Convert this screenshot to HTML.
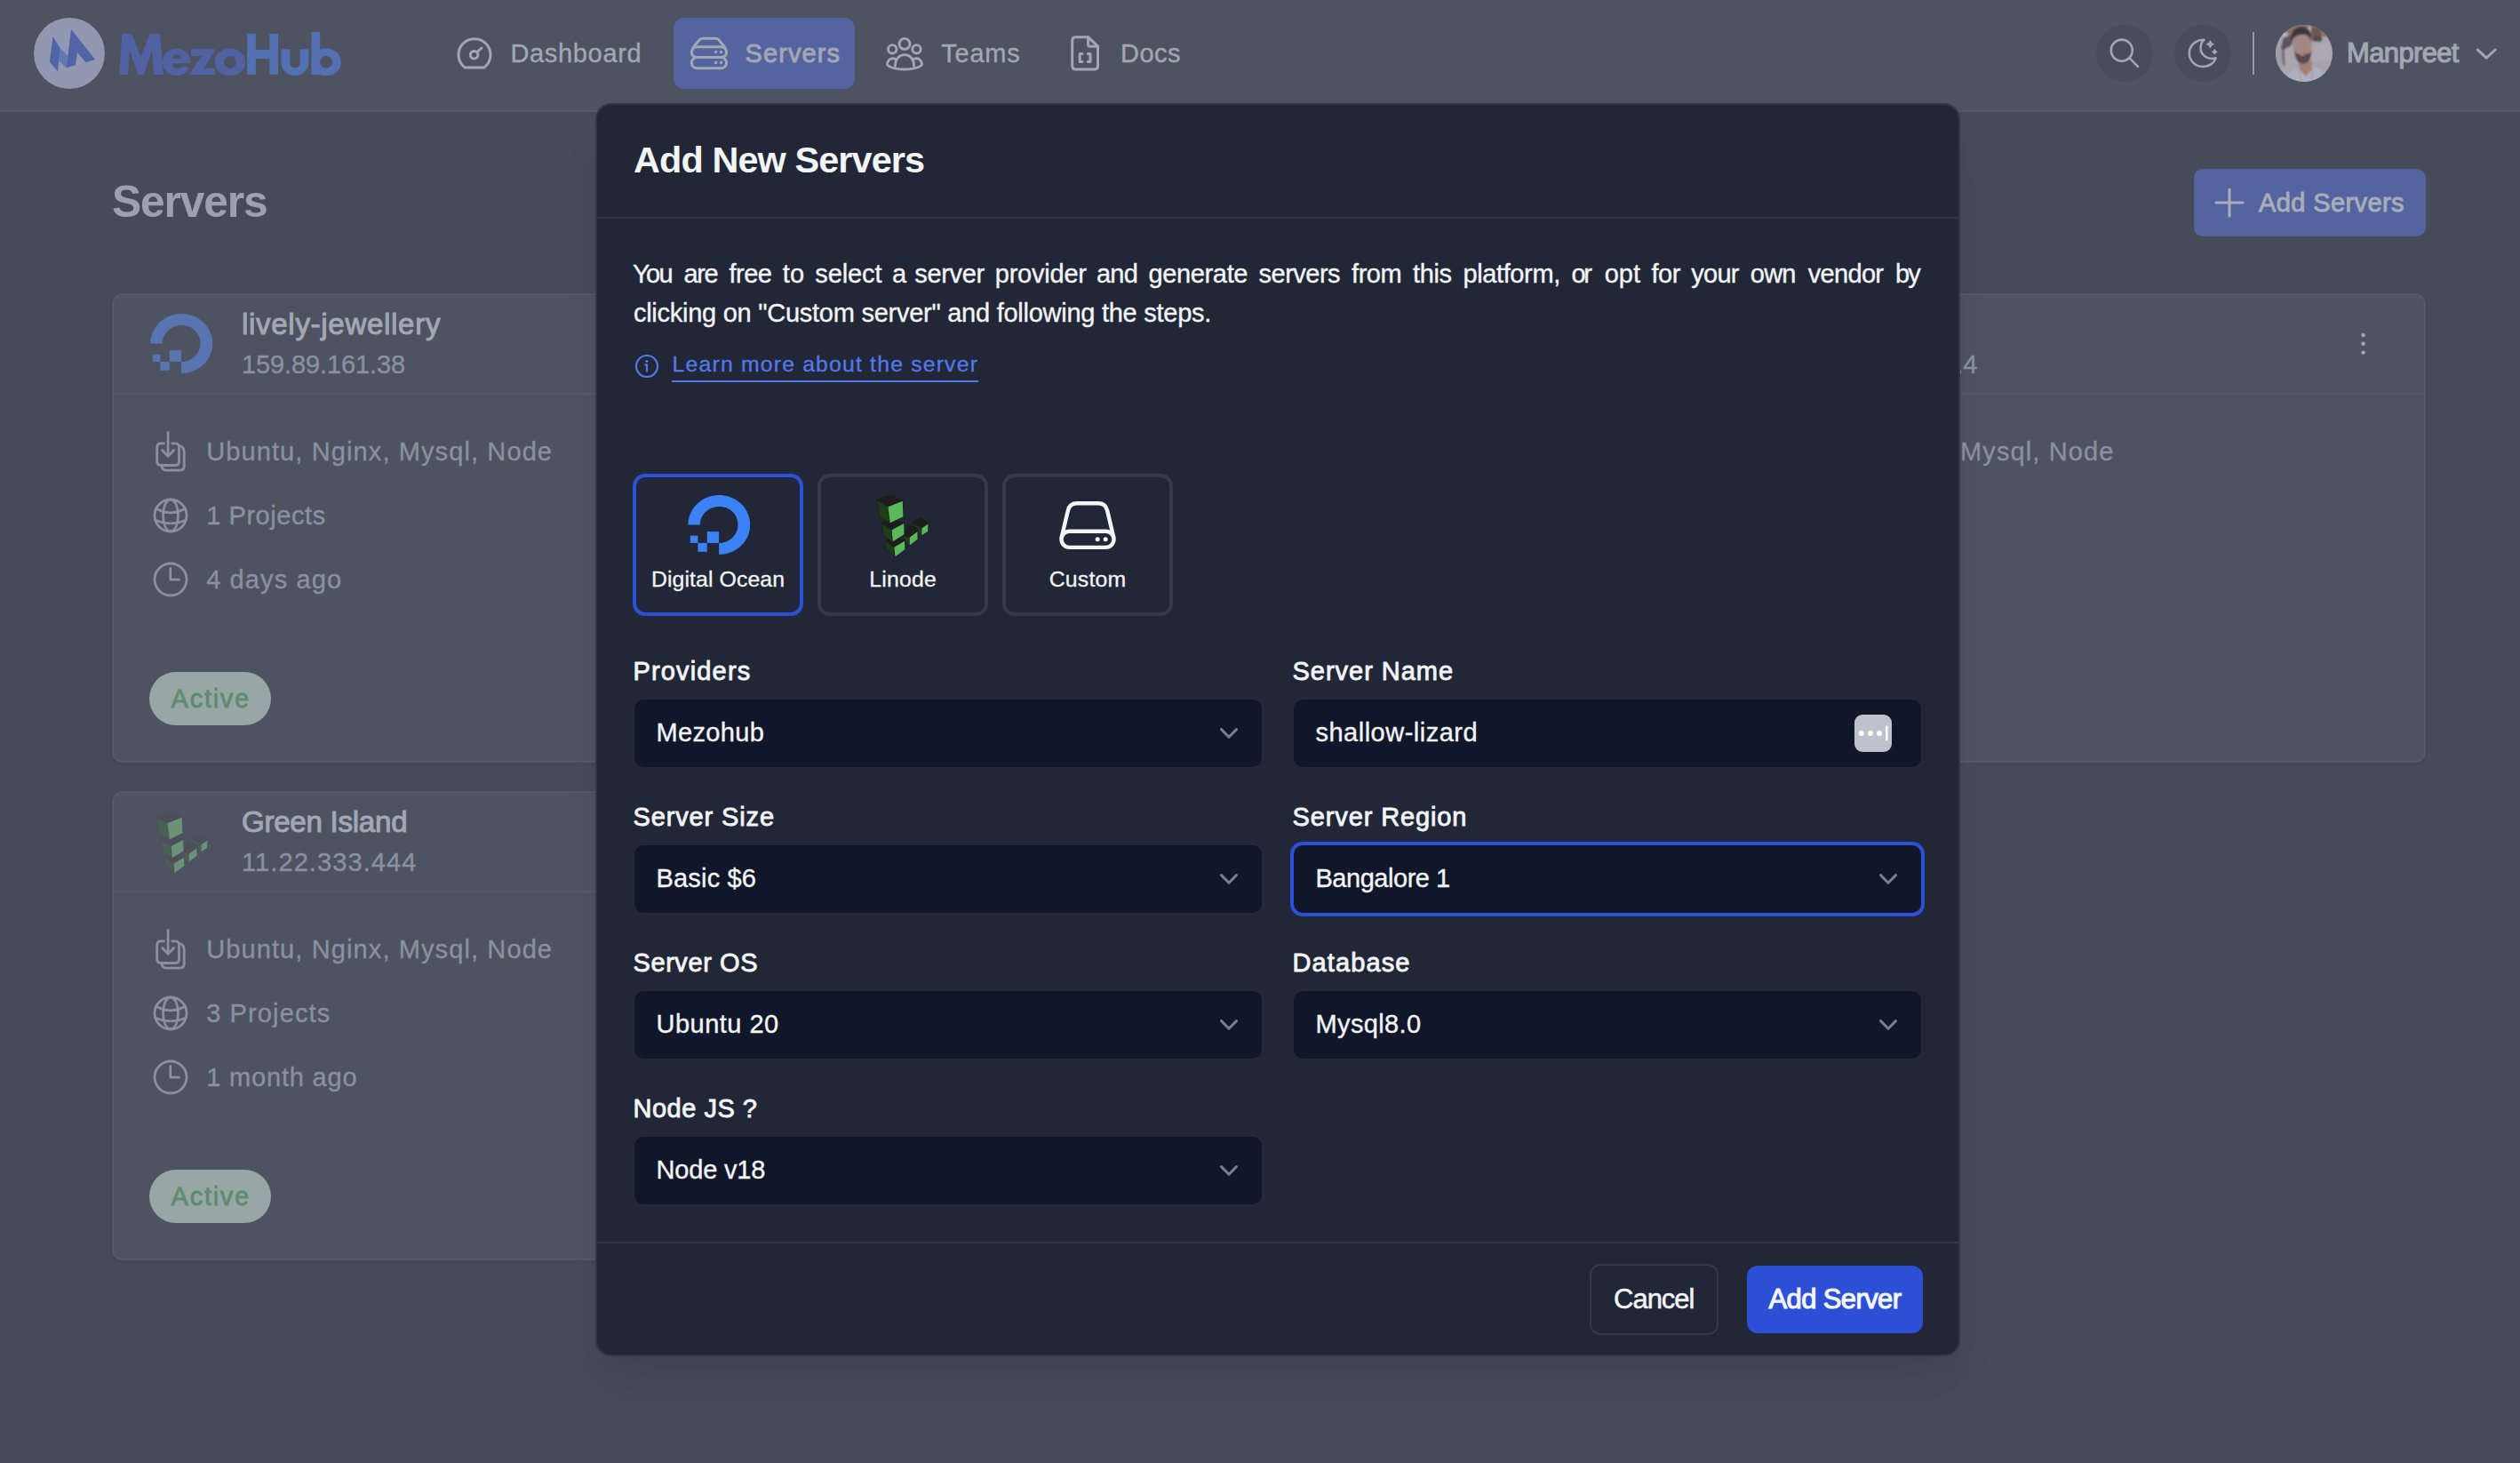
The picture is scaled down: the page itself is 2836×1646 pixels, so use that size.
<!DOCTYPE html>
<html lang="en"><head><meta charset="utf-8"><title>MezoHub - Servers</title>
<style>
html,body{margin:0;padding:0;background:#464b5a}
#app{position:relative;width:2836px;height:1646px;overflow:hidden;background:#464b5a;font-family:"Liberation Sans",sans-serif}
.b{position:absolute;display:block}
.t{position:absolute;white-space:pre;line-height:1;display:block}
@media (max-width:1500px){#app{zoom:.5}}
</style></head>
<body>
<div id="app">
<div class="b" style="left:0px;top:0px;width:2836px;height:124px;background:#4e5362;"></div>
<div class="b" style="left:0px;top:124px;width:2836px;height:2px;background:#565b69;"></div>
<svg class="b" style="left:38px;top:20px;" width="80" height="80" viewBox="38 20 80 80" fill="none">
<circle cx="78" cy="60" r="40" fill="#9297b2"/>
<polygon points="59.4,40.9 67.7,53.7 65,80.6 55.9,69.6" fill="#5364a6"/>
<polygon points="67.7,53.7 76,62.8 74.5,76.3 66.2,68.1" fill="#6278b4"/>
<polygon points="80.1,32.9 107.2,67 96.6,70.3 87,59 85,73.3 74.5,76.3" fill="#5364a6"/>
</svg>
<svg class="b" style="left:30px;top:10px" width="380" height="100" viewBox="0 0 2520 663">
<g fill="#5162a3">
<polygon points="712,185 785,185 852,360 918,185 995,185 1020,490 950,490 935,312 875,490 830,490 770,312 757,490 690,490"/>
<ellipse cx="1118" cy="397" rx="104" ry="101"/>
<polygon points="1226.6,300.2 1411.9,300.2 1322.2,443.5 1406.1,443.5 1406.1,489.9 1213.6,489.9 1304.8,350.8 1226.6,350.8"/>
<path fill-rule="evenodd" d="M1518 295 C1583 295 1632 338 1632 397 C1632 456 1583 498 1518 498 C1453 498 1405 456 1405 397 C1405 338 1453 295 1518 295 Z M1518 352 C1492 352 1473 371 1473 397 C1473 423 1492 442 1518 442 C1544 442 1563 423 1563 397 C1563 371 1544 352 1518 352 Z"/>
</g>
<path d="M1086 370 A34 32 0 0 1 1154 370 Z" fill="#4e5362"/>
<path d="M1086 406 H1232 V446.4 L1216.4 446.4 L1170.1 424.7 C1160 438 1145 445 1126.7 445 C1105 445 1089 432 1086 417 Z" fill="#4e5362"/>
<g fill="#5270b2">
<rect x="1645" y="185" width="65" height="305"/><rect x="1812" y="185" width="65" height="305"/><rect x="1700" y="305" width="120" height="67"/>
<path d="M1900 300 H1965 V402 A37.5 38 0 0 0 2040 402 V300 H2105 V398 A102.5 100 0 0 1 1900 398 Z"/>
<rect x="2125" y="172" width="65" height="318"/>
<path fill-rule="evenodd" d="M2235 295 C2300 295 2346 338 2346 397 C2346 456 2300 498 2235 498 C2170 498 2125 456 2125 397 C2125 338 2170 295 2235 295 Z M2235 352 C2209 352 2190 371 2190 397 C2190 423 2209 442 2235 442 C2261 442 2280 423 2280 397 C2280 371 2261 352 2235 352 Z"/>
</g></svg>
<svg class="b" style="left:508px;top:36px;" width="52" height="48" viewBox="508 36 52 48" fill="none">
<g stroke="#a3a7b2" stroke-width="3" stroke-linecap="round" stroke-linejoin="round">
<path d="M523.3 76.1 A18 18 0 1 1 544.7 76.1 Z"/>
<circle cx="533.6" cy="61.7" r="4.3"/>
<path d="M536.8 58.6 L542 54"/></g></svg>
<div class="b" style="left:758px;top:20px;width:204px;height:80px;background:#5364a1;border-radius:12px;"></div>
<svg class="b" style="left:772px;top:38px;" width="52" height="44" viewBox="772 38 52 44" fill="none">
<g stroke="#a3a7b2" stroke-width="3" stroke-linecap="round" stroke-linejoin="round">
<path d="M780 53.5 L787.3 44.6 Q788.5 43.2 790.3 43.2 L805.7 43.2 Q807.5 43.2 808.7 44.6 L816 53.5"/>
<rect x="778.3" y="52.7" width="39.3" height="11.9" rx="5.95"/>
<rect x="778.3" y="64.6" width="39.3" height="12.2" rx="6.1"/></g>
<g fill="#a3a7b2"><circle cx="805.6" cy="58.5" r="1.8"/><circle cx="811.5" cy="58.5" r="1.8"/><circle cx="805.6" cy="70.4" r="1.8"/><circle cx="811.5" cy="70.4" r="1.8"/></g></svg>
<svg class="b" style="left:992px;top:38px;" width="52" height="46" viewBox="992 38 52 46" fill="none">
<g stroke="#a3a7b2" stroke-width="2.9" stroke-linecap="round" stroke-linejoin="round">
<circle cx="1018" cy="49.4" r="6"/>
<circle cx="1004.3" cy="55.3" r="4.7"/>
<circle cx="1031.5" cy="55.3" r="4.7"/>
<path d="M1007.4 74.6 C1007.4 66.5 1011.8 61.6 1018 61.6 C1024.2 61.6 1028.6 66.5 1028.6 74.6"/>
<path d="M1008.9 67.3 C1007.7 66.300 1006.300 65.800 1004.800 65.800 C1001.300 65.800 998.500 68.600 998.500 72.200 C998.500 73.400 999.300 74.100 1000.700 74.700 C1005.500 76.900 1011 78 1018 78 C1025 78 1030.500 76.900 1035.300 74.700 C1036.700 74.100 1037.500 73.400 1037.500 72.200 C1037.500 68.600 1034.700 65.800 1031.200 65.800 C1029.700 65.800 1028.300 66.300 1027.100 67.300"/>
</g></svg>
<svg class="b" style="left:1200px;top:36px;" width="42" height="48" viewBox="1200 36 42 48" fill="none">
<g stroke="#a3a7b2" stroke-width="3" stroke-linecap="round" stroke-linejoin="round">
<path d="M1206.7 45.8 Q1206.7 41.8 1210.7 41.8 L1224.6 41.8 L1235.5 52.2 L1235.5 74 Q1235.5 78 1231.5 78 L1210.7 78 Q1206.7 78 1206.7 74 Z"/>
<path d="M1224.6 41.8 L1224.6 50.2 Q1224.6 52.2 1226.6 52.2 L1235.5 52.2"/>
<path d="M1218 60.4 L1215.2 60.4 L1215.2 69.6 L1218 69.6"/>
<path d="M1224.2 60.4 L1227 60.4 L1227 69.6 L1224.2 69.6"/>
</g></svg>
<div class="b" style="left:2359px;top:28px;width:64px;height:64px;background:#484d5d;border-radius:32px;"></div>
<svg class="b" style="left:2370px;top:40px;" width="42" height="42" viewBox="2370 40 42 42" fill="none">
<g stroke="#a3a7b2" stroke-width="2.6" stroke-linecap="round">
<circle cx="2387.8" cy="56.6" r="12"/>
<path d="M2396.6 65.4 L2406 74.8"/></g></svg>
<div class="b" style="left:2447px;top:28px;width:64px;height:64px;background:#484d5d;border-radius:32px;"></div>
<svg class="b" style="left:2458px;top:38px;" width="44" height="44" viewBox="2458 38 44 44" fill="none">
<g stroke="#a3a7b2" stroke-width="2.5" stroke-linecap="round" stroke-linejoin="round">
<path d="M2480.6 44.8 C2470 44.8 2463.8 52 2463.8 60 C2463.8 68.5 2470.5 74.9 2479 74.9 C2486 74.9 2491.5 71 2493.8 65.3 C2483 68 2474.6 60.5 2477 50.5 C2477.6 48 2479 46 2480.6 44.8 Z"/>
</g>
<g fill="#a3a7b2">
<path d="M2487.4 45 L2489.2 48 L2492.2 49.800 L2489.200 51.600 L2487.400 54.600 L2485.600 51.600 L2482.600 49.800 L2485.600 48 Z"/>
<path d="M2492.3 54.800 L2493.700 56.900 L2495.800 58.300 L2493.700 59.700 L2492.300 61.800 L2490.900 59.700 L2488.800 58.300 L2490.900 56.900 Z"/>
</g></svg>
<div class="b" style="left:2535px;top:36px;width:2px;height:48px;background:#969ba8;"></div>
<svg class="b" style="left:2561px;top:28px" width="64" height="64" viewBox="0 0 64 64">
<defs><clipPath id="avc"><circle cx="32" cy="32" r="32"/></clipPath><filter id="avb" x="-10%" y="-10%" width="120%" height="120%"><feGaussianBlur stdDeviation="1.15"/></filter></defs>
<g clip-path="url(#avc)"><rect width="64" height="64" fill="#a8a3ac"/>
<g filter="url(#avb)">
<rect x="-2" y="-2" width="68" height="15" fill="#8e6f66"/>
<ellipse cx="10" cy="11" rx="4" ry="3" fill="#b9b3b9"/><ellipse cx="47" cy="6" rx="3" ry="3.500" fill="#c2bbbe"/><ellipse cx="38" cy="5" rx="2" ry="4" fill="#b5aaa9"/>
<path d="M6 26 L9 14 L17 12 L19 20 L15 26 L10 34 Z" fill="#595560"/>
<path d="M40 3 L50 2 L52 18 L41 18 Z" fill="#6d5651"/>
<path d="M44 12 L52 14 L51 19 L42 18 Z" fill="#4e4850"/>
<ellipse cx="15" cy="44" rx="9" ry="19" fill="#aaa5ae"/><ellipse cx="2" cy="40" rx="6" ry="16" fill="#a29da6"/>
<path d="M7 30 L9.5 30 L10.5 46 L8.5 46 Z" fill="#5d5962"/>
<ellipse cx="52" cy="34" rx="12" ry="14" fill="#aea8b0"/><ellipse cx="55" cy="52" rx="14" ry="12" fill="#a6a1aa"/>
<path d="M10 66 C12 54 20 50 28 47 L40 46 C50 49 58 54 60 66 Z" fill="#adb0c2"/>
<path d="M26 40 L41 40 L41 50 L34 58 L27 50 Z" fill="#a17f78"/>
<path d="M26 50 L29 64 M41.500 48 L41 62" stroke="#b59284" stroke-width="1.300"/>
<path d="M19.500 22 C19 10 25 8 30 8 C37 8 40.500 13 40 24 C40 34 37 42 30.500 42.500 C24 42 20 34 19.500 22 Z" fill="#a7867f"/>
<path d="M21 29 C22 40 26 43.500 30.500 43.500 C36 43.500 40 40 40.500 28 C38.500 33 36 33.500 30.500 32 C26 33 23.500 33.500 21 29 Z" fill="#574a50"/>
<ellipse cx="30" cy="33.500" rx="2.800" ry="1.300" fill="#b98f92"/>
<path d="M17.500 20 C15.500 8 22 1.500 30 2 C38 2.500 41.500 9 39.500 19.500 C38.500 13 36 10.500 30 11 C23.500 11 20 14 17.500 20 Z" fill="#3d3740"/>
<circle cx="24.300" cy="23.700" r="2.200" fill="#8a8b98"/><circle cx="32.800" cy="21.800" r="2.200" fill="#8a8b98"/>
</g></g></svg>
<svg class="b" style="left:2782px;top:50px;" width="32" height="22" viewBox="2782 50 32 22" fill="none"><path d="M2788.3 56 L2798.2 65.2 L2808.2 56" stroke="#a3a7b2" stroke-width="3" stroke-linecap="round" stroke-linejoin="round"/></svg>
<span class="t" style="left:574.4px;top:45.5px;font-size:29.0px;color:#a3a7b2;letter-spacing:0.68px;-webkit-text-stroke:0.35px #a3a7b2;">Dashboard</span>
<span class="t" style="left:838.6px;top:45.5px;font-size:29.0px;color:#a3a7b2;letter-spacing:1.08px;-webkit-text-stroke:0.9px #a3a7b2;">Servers</span>
<span class="t" style="left:1059.2px;top:45.5px;font-size:29.0px;color:#a3a7b2;letter-spacing:0.79px;-webkit-text-stroke:0.35px #a3a7b2;">Teams</span>
<span class="t" style="left:1261.0px;top:45.5px;font-size:29.0px;color:#a3a7b2;letter-spacing:0.47px;-webkit-text-stroke:0.35px #a3a7b2;">Docs</span>
<span class="t" style="left:2641.0px;top:43.8px;font-size:31.0px;color:#a3a7b2;letter-spacing:-0.64px;-webkit-text-stroke:1.1px #a3a7b2;">Manpreet</span>
<div class="b" style="left:2469px;top:190px;width:261px;height:76px;background:#5464a1;border-radius:10px;"></div>
<svg class="b" style="left:2488px;top:208px;" width="40" height="40" viewBox="2488 208 40 40" fill="none"><path d="M2509 213 V243 M2494 228 H2524" stroke="#a9adb9" stroke-width="3" stroke-linecap="round"/></svg>
<div class="b" style="left:126px;top:330px;width:846.67px;height:528px;background:#4e5362;border-radius:12px;border:2px solid #565b69;box-sizing:border-box;box-shadow:0 0 0 1px rgba(40,36,60,.10),0 2px 3px rgba(30,30,50,.06);"></div>
<div class="b" style="left:128px;top:442px;width:842.67px;height:2px;background:#565b69;"></div>
<svg preserveAspectRatio="none" class="b" style="left:169.4px;top:352.9px;" width="70.7" height="67.5" viewBox="0 -2 70.5 70" fill="none"><g fill="#5875b2">
<path d="M35 67.3 V53.9 C49.3 53.9 60.3 39.8 54.9 24.8 C52.9 19.3 48.4 14.9 42.9 12.9 C27.9 7.5 13.8 18.5 13.8 32.8 H0.4 C0.4 10.1 22.4 -7.7 46.300 -0.2 C56.7 3.1 65 11.4 68.3 21.8 C75.8 45.7 58 67.3 35 67.3 Z" transform="translate(0,0)"/>
<rect x="21.7" y="40.6" width="13.3" height="13.3"/>
<rect x="11.4" y="53.9" width="10.3" height="10.3"/>
<rect x="2.8" y="45.3" width="8.6" height="8.6"/></g></svg>
<svg class="b" style="left:170px;top:480px;" width="44" height="54" viewBox="170 480 44 54" fill="none"><g stroke="#8b90a1" stroke-width="2.8" stroke-linecap="round" stroke-linejoin="round" transform="translate(0,0)">
<path d="M189.1 486.4 V512.6 M182.6 506.6 L189.1 513.2 L195.600 506.600"/>
<path d="M184.500 498.800 H181.200 Q176.700 498.800 176.700 503.300 V519 Q176.700 523.500 181.200 523.500 H197 Q201.500 523.500 201.500 519 V503.300 Q201.500 498.800 197 498.800 H193.700"/>
<path d="M201.7 501.7 Q207.2 502.6 207.2 508.300 V524.600 Q207.200 529.100 202.700 529.100 H187.300 Q183 529.100 182.200 525.200"/>
</g></svg>
<svg class="b" style="left:170px;top:558px;" width="44" height="44" viewBox="170 558 44 44" fill="none"><g stroke="#8b90a1" stroke-width="2.8" stroke-linecap="round" transform="translate(0,0)">
<circle cx="192" cy="580" r="18"/>
<ellipse cx="192" cy="580" rx="8.5" ry="18"/>
<path d="M176 572.2 Q192 581.4 208 572.200"/>
<path d="M175 585 Q192 592.8 209 585"/>
</g></svg>
<svg class="b" style="left:170px;top:630px;" width="44" height="44" viewBox="170 630 44 44" fill="none"><g stroke="#8b90a1" stroke-width="2.8" stroke-linecap="round" stroke-linejoin="round" transform="translate(0,0)">
<circle cx="192" cy="652" r="18"/>
<path d="M191.800 639.500 V652.200 H201.500"/>
</g></svg>
<div class="b" style="left:168px;top:756px;width:137px;height:60px;background:#98a6a6;border-radius:30px;"></div>
<div class="b" style="left:126px;top:890px;width:846.67px;height:528px;background:#4e5362;border-radius:12px;border:2px solid #565b69;box-sizing:border-box;box-shadow:0 0 0 1px rgba(40,36,60,.10),0 2px 3px rgba(30,30,50,.06);"></div>
<div class="b" style="left:128px;top:1002px;width:842.67px;height:2px;background:#565b69;"></div>
<svg class="b" style="left:174.6px;top:911.5px;" width="60" height="71.4" viewBox="270 175 975 1160" fill="none"><polygon points="935,688 1075,600 1237,688 1225,868 1100,945 1040,915 940,760" fill="#4d4e5a"/><polygon points="947,714 1097,797 1099,934 1048,910 1040,800 950,752" fill="#4c5f55"/><polygon points="1107,797 1221,718 1214,858 1106,928" fill="#6a9276"/><polygon points="760,925 868,722 1040,845 1035,1005 878,1125 805,1068" fill="#4d4e5a"/><polygon points="770,930 871,967 875,1112 813,1062" fill="#4c5f55"/><polygon points="882,966 1024,862 1027,998 882,1108" fill="#6a9276"/><polygon points="428,1005 600,955 800,1010 805,1190 610,1330 450,1185" fill="#4d4e5a"/><polygon points="441,1031 589,1146 599,1318 461,1180" fill="#4c5f55"/><polygon points="601,1146 789,1032 797,1184 619,1318" fill="#6a9276"/><polygon points="362,690 575,640 790,695 790,915 570,1050 395,920" fill="#4d4e5a"/><polygon points="378,716 545,831 559,1034 406,914" fill="#4c5f55"/><polygon points="556,831 777,712 781,909 576,1039" fill="#6a9276"/><polygon points="278,265 555,180 770,285 775,590 520,705 330,590" fill="#4d4e5a"/><polygon points="291,301 487,406 509,689 336,580" fill="#4c5f55"/><polygon points="489,406 754,301 764,584 526,699" fill="#6a9276"/></svg>
<svg class="b" style="left:170px;top:1040px;" width="44" height="54" viewBox="170 1040 44 54" fill="none"><g stroke="#8b90a1" stroke-width="2.8" stroke-linecap="round" stroke-linejoin="round" transform="translate(0,560)">
<path d="M189.1 486.4 V512.6 M182.6 506.6 L189.1 513.2 L195.600 506.600"/>
<path d="M184.500 498.800 H181.200 Q176.700 498.800 176.700 503.300 V519 Q176.700 523.500 181.200 523.500 H197 Q201.500 523.500 201.500 519 V503.300 Q201.500 498.800 197 498.800 H193.700"/>
<path d="M201.7 501.7 Q207.2 502.6 207.2 508.300 V524.600 Q207.200 529.100 202.700 529.100 H187.300 Q183 529.100 182.200 525.200"/>
</g></svg>
<svg class="b" style="left:170px;top:1118px;" width="44" height="44" viewBox="170 1118 44 44" fill="none"><g stroke="#8b90a1" stroke-width="2.8" stroke-linecap="round" transform="translate(0,560)">
<circle cx="192" cy="580" r="18"/>
<ellipse cx="192" cy="580" rx="8.5" ry="18"/>
<path d="M176 572.2 Q192 581.4 208 572.200"/>
<path d="M175 585 Q192 592.8 209 585"/>
</g></svg>
<svg class="b" style="left:170px;top:1190px;" width="44" height="44" viewBox="170 1190 44 44" fill="none"><g stroke="#8b90a1" stroke-width="2.8" stroke-linecap="round" stroke-linejoin="round" transform="translate(0,560)">
<circle cx="192" cy="652" r="18"/>
<path d="M191.800 639.500 V652.200 H201.500"/>
</g></svg>
<div class="b" style="left:168px;top:1316px;width:137px;height:60px;background:#98a6a6;border-radius:30px;"></div>
<div class="b" style="left:1883.34px;top:330px;width:846.67px;height:528px;background:#4e5362;border-radius:12px;border:2px solid #565b69;box-sizing:border-box;box-shadow:0 0 0 1px rgba(40,36,60,.10),0 2px 3px rgba(30,30,50,.06);"></div>
<div class="b" style="left:1885.34px;top:442px;width:842.67px;height:2px;background:#565b69;"></div>
<svg class="b" style="left:2650px;top:368px;" width="20" height="38" viewBox="2650 368 20 38" fill="none"><g fill="#a3a7b3"><circle cx="2659.6" cy="377" r="2.2"/><circle cx="2659.6" cy="386.800" r="2.2"/><circle cx="2659.6" cy="396.600" r="2.2"/></g></svg>
<span class="t" style="left:126.0px;top:202.9px;font-size:49.7px;color:#9da1ad;font-weight:700;letter-spacing:-1.13px;">Servers</span>
<span class="t" style="left:2542.0px;top:213.9px;font-size:29.0px;color:#a9adb9;letter-spacing:0.39px;-webkit-text-stroke:0.9px #a9adb9;">Add Servers</span>
<span class="t" style="left:272.0px;top:348.1px;font-size:33.1px;color:#a3a7b3;letter-spacing:0.68px;-webkit-text-stroke:1.0px #a3a7b3;">lively-jewellery</span>
<span class="t" style="left:272.0px;top:396.3px;font-size:29.0px;color:#8b90a1;letter-spacing:-0.11px;-webkit-text-stroke:0.35px #8b90a1;">159.89.161.38</span>
<span class="t" style="left:232.2px;top:493.5px;font-size:29.0px;color:#8b90a1;letter-spacing:1.11px;-webkit-text-stroke:0.35px #8b90a1;">Ubuntu, Nginx, Mysql, Node</span>
<span class="t" style="left:232.2px;top:565.5px;font-size:29.0px;color:#8b90a1;letter-spacing:0.56px;-webkit-text-stroke:0.35px #8b90a1;">1 Projects</span>
<span class="t" style="left:232.2px;top:637.5px;font-size:29.0px;color:#8b90a1;letter-spacing:1.12px;-webkit-text-stroke:0.35px #8b90a1;">4 days ago</span>
<span class="t" style="left:192.6px;top:772.1px;font-size:29.0px;color:#5e8c6f;letter-spacing:1.72px;-webkit-text-stroke:0.8px #5e8c6f;">Active</span>
<span class="t" style="left:272.0px;top:908.1px;font-size:33.1px;color:#a3a7b3;letter-spacing:-0.26px;-webkit-text-stroke:1.0px #a3a7b3;">Green Island</span>
<span class="t" style="left:272.0px;top:956.3px;font-size:29.0px;color:#8b90a1;letter-spacing:1.09px;-webkit-text-stroke:0.35px #8b90a1;">11.22.333.444</span>
<span class="t" style="left:232.2px;top:1053.5px;font-size:29.0px;color:#8b90a1;letter-spacing:1.11px;-webkit-text-stroke:0.35px #8b90a1;">Ubuntu, Nginx, Mysql, Node</span>
<span class="t" style="left:232.2px;top:1125.5px;font-size:29.0px;color:#8b90a1;letter-spacing:1.12px;-webkit-text-stroke:0.35px #8b90a1;">3 Projects</span>
<span class="t" style="left:232.2px;top:1197.5px;font-size:29.0px;color:#8b90a1;letter-spacing:0.82px;-webkit-text-stroke:0.35px #8b90a1;">1 month ago</span>
<span class="t" style="left:192.6px;top:1332.1px;font-size:29.0px;color:#5e8c6f;letter-spacing:1.72px;-webkit-text-stroke:0.8px #5e8c6f;">Active</span>
<span class="t" style="left:1989.5px;top:493.5px;font-size:29.0px;color:#8b90a1;letter-spacing:1.11px;-webkit-text-stroke:0.35px #8b90a1;">Ubuntu, Nginx, Mysql, Node</span>
<span class="t" style="right:610.5px;top:396.3px;font-size:29.0px;color:#8b90a1;-webkit-text-stroke:0.35px #8b90a1;">143.11.2.4</span>
<div class="b" style="left:670px;top:116px;width:1536px;height:1409.5px;background:#212736;border-radius:18px;border:2px solid #313746;box-sizing:border-box;box-shadow:0 40px 50px -10px rgba(20,16,40,.09),0 16px 20px -12px rgba(20,16,40,.07);"></div>
<div class="b" style="left:672px;top:244px;width:1532px;height:2px;background:#313746;"></div>
<svg class="b" style="left:712px;top:396px;" width="32" height="32" viewBox="712 396 32 32" fill="none"><circle cx="728" cy="412" r="12" stroke="#5577e6" stroke-width="2.2"/><path d="M728 410.300 V417.600 M726.2 410.300 H728" stroke="#5577e6" stroke-width="2.2" stroke-linecap="round"/><circle cx="727.800" cy="406.300" r="1.5" fill="#5577e6"/></svg>
<div class="b" style="left:756px;top:428px;width:344.6px;height:2px;background:#5577e6;"></div>
<div class="b" style="left:711.6px;top:533px;width:192px;height:160px;border-radius:14px;border:4px solid #2c50d7;box-sizing:border-box;"></div>
<div class="b" style="left:919.6px;top:533px;width:192px;height:160px;border-radius:14px;border:4px solid #343a49;box-sizing:border-box;"></div>
<div class="b" style="left:1127.6px;top:533px;width:192px;height:160px;border-radius:14px;border:4px solid #343a49;box-sizing:border-box;"></div>
<svg preserveAspectRatio="none" class="b" style="left:773.6px;top:556.7px;" width="70.7" height="67.5" viewBox="0 -2 70.5 70" fill="none"><g fill="#3a82f6">
<path d="M35 67.3 V53.9 C49.3 53.9 60.3 39.8 54.9 24.8 C52.9 19.3 48.4 14.9 42.9 12.9 C27.9 7.5 13.8 18.5 13.8 32.8 H0.4 C0.4 10.1 22.4 -7.7 46.300 -0.2 C56.7 3.1 65 11.4 68.3 21.8 C75.8 45.7 58 67.3 35 67.3 Z" transform="translate(0,0)"/>
<rect x="21.7" y="40.6" width="13.3" height="13.3"/>
<rect x="11.4" y="53.9" width="10.3" height="10.3"/>
<rect x="2.8" y="45.3" width="8.6" height="8.6"/></g></svg>
<svg class="b" style="left:986.2px;top:555.7px;" width="60" height="71.4" viewBox="270 175 975 1160" fill="none"><polygon points="935,688 1075,600 1237,688 1225,868 1100,945 1040,915 940,760" fill="#1d1d1e"/><polygon points="947,714 1097,797 1099,934 1048,910 1040,800 950,752" fill="#1f3d17"/><polygon points="1107,797 1221,718 1214,858 1106,928" fill="#5cb85c"/><polygon points="760,925 868,722 1040,845 1035,1005 878,1125 805,1068" fill="#1d1d1e"/><polygon points="770,930 871,967 875,1112 813,1062" fill="#1f3d17"/><polygon points="882,966 1024,862 1027,998 882,1108" fill="#5cb85c"/><polygon points="428,1005 600,955 800,1010 805,1190 610,1330 450,1185" fill="#1d1d1e"/><polygon points="441,1031 589,1146 599,1318 461,1180" fill="#1f3d17"/><polygon points="601,1146 789,1032 797,1184 619,1318" fill="#5cb85c"/><polygon points="362,690 575,640 790,695 790,915 570,1050 395,920" fill="#1d1d1e"/><polygon points="378,716 545,831 559,1034 406,914" fill="#1f3d17"/><polygon points="556,831 777,712 781,909 576,1039" fill="#5cb85c"/><polygon points="278,265 555,180 770,285 775,590 520,705 330,590" fill="#1d1d1e"/><polygon points="291,301 487,406 509,689 336,580" fill="#1f3d17"/><polygon points="489,406 754,301 764,584 526,699" fill="#5cb85c"/></svg>
<svg class="b" style="left:1186px;top:558px;" width="76" height="66" viewBox="1186 558 76 66" fill="none"><g stroke="#f3f4f6" stroke-width="4.4" stroke-linecap="round" stroke-linejoin="round">
<path d="M1194.7 604.5 L1201.9 574.4 Q1203.9 566.3 1212 566.3 H1236 Q1244.1 566.3 1246.1 574.4 L1253.3 604.5"/>
<rect x="1194.5" y="597.8" width="59" height="18.1" rx="9.05"/></g>
<g fill="#f3f4f6"><circle cx="1235.2" cy="606.8" r="2.500"/><circle cx="1244.2" cy="606.8" r="2.500"/></g></svg>
<div class="b" style="left:712px;top:785px;width:710px;height:80px;background:#11172a;border-radius:12px;border:2px solid #24283e;box-sizing:border-box;"></div>
<svg class="b" style="left:1368.5px;top:815.2px;" width="28" height="20" viewBox="1368.5 815.2 28 20" fill="none"><path d="M1374.0 820.8000000000001 L1382.5 829.5 L1391.0 820.8000000000001" stroke="#787e91" stroke-width="3" stroke-linecap="round" stroke-linejoin="round"/></svg>
<div class="b" style="left:1454px;top:785px;width:710px;height:80px;background:#11172a;border-radius:12px;border:2px solid #24283e;box-sizing:border-box;"></div>
<div class="b" style="left:712px;top:949px;width:710px;height:80px;background:#11172a;border-radius:12px;border:2px solid #24283e;box-sizing:border-box;"></div>
<svg class="b" style="left:1368.5px;top:979.2px;" width="28" height="20" viewBox="1368.5 979.2 28 20" fill="none"><path d="M1374.0 984.8000000000001 L1382.5 993.5 L1391.0 984.8000000000001" stroke="#787e91" stroke-width="3" stroke-linecap="round" stroke-linejoin="round"/></svg>
<div class="b" style="left:1454px;top:949px;width:710px;height:80px;background:#11172a;border-radius:12px;border:2px solid #2c50d7;box-sizing:border-box;box-shadow:0 0 0 2px #2c50d7;"></div>
<svg class="b" style="left:2110.5px;top:979.2px;" width="28" height="20" viewBox="2110.5 979.2 28 20" fill="none"><path d="M2116.0 984.8000000000001 L2124.5 993.5 L2133.0 984.8000000000001" stroke="#787e91" stroke-width="3" stroke-linecap="round" stroke-linejoin="round"/></svg>
<div class="b" style="left:712px;top:1113px;width:710px;height:80px;background:#11172a;border-radius:12px;border:2px solid #24283e;box-sizing:border-box;"></div>
<svg class="b" style="left:1368.5px;top:1143.2px;" width="28" height="20" viewBox="1368.5 1143.2 28 20" fill="none"><path d="M1374.0 1148.8 L1382.5 1157.5 L1391.0 1148.8" stroke="#787e91" stroke-width="3" stroke-linecap="round" stroke-linejoin="round"/></svg>
<div class="b" style="left:1454px;top:1113px;width:710px;height:80px;background:#11172a;border-radius:12px;border:2px solid #24283e;box-sizing:border-box;"></div>
<svg class="b" style="left:2110.5px;top:1143.2px;" width="28" height="20" viewBox="2110.5 1143.2 28 20" fill="none"><path d="M2116.0 1148.8 L2124.5 1157.5 L2133.0 1148.8" stroke="#787e91" stroke-width="3" stroke-linecap="round" stroke-linejoin="round"/></svg>
<div class="b" style="left:712px;top:1277px;width:710px;height:80px;background:#11172a;border-radius:12px;border:2px solid #24283e;box-sizing:border-box;"></div>
<svg class="b" style="left:1368.5px;top:1307.2px;" width="28" height="20" viewBox="1368.5 1307.2 28 20" fill="none"><path d="M1374.0 1312.8 L1382.5 1321.5 L1391.0 1312.8" stroke="#787e91" stroke-width="3" stroke-linecap="round" stroke-linejoin="round"/></svg>
<div class="b" style="left:2087px;top:804px;width:42px;height:42px;background:#bec1cc;border-radius:9px;"></div>
<svg class="b" style="left:2087px;top:804px;" width="42" height="42" viewBox="2087 804 42 42" fill="none"><g fill="#fff"><circle cx="2094.7" cy="825.1" r="3"/><circle cx="2105" cy="825.1" r="3"/><circle cx="2115.100" cy="825.1" r="3"/><rect x="2122" y="816.6" width="2.5" height="17" rx="1.2"/></g></svg>
<div class="b" style="left:672px;top:1397px;width:1532px;height:2px;background:#313746;"></div>
<div class="b" style="left:1789px;top:1422px;width:145px;height:80px;border-radius:12px;border:2px solid #343a49;box-sizing:border-box;"></div>
<div class="b" style="left:1966px;top:1424px;width:198px;height:76px;background:#2c4fd6;border-radius:12px;"></div>
<span class="t" style="left:713.0px;top:159.6px;font-size:41.4px;color:#f3f4f6;font-weight:700;letter-spacing:-0.89px;">Add New Servers</span>
<span class="t" style="left:711.9px;top:293.5px;font-size:29.0px;color:#f3f4f6;letter-spacing:-1.62px;-webkit-text-stroke:0.35px #f3f4f6;">You</span>
<span class="t" style="left:769.6px;top:293.5px;font-size:29.0px;color:#f3f4f6;letter-spacing:-1.46px;-webkit-text-stroke:0.35px #f3f4f6;">are</span>
<span class="t" style="left:820.4px;top:293.5px;font-size:29.0px;color:#f3f4f6;letter-spacing:-0.46px;-webkit-text-stroke:0.35px #f3f4f6;">free</span>
<span class="t" style="left:880.7px;top:293.5px;font-size:29.0px;color:#f3f4f6;letter-spacing:0.21px;-webkit-text-stroke:0.35px #f3f4f6;">to</span>
<span class="t" style="left:917.3px;top:293.5px;font-size:29.0px;color:#f3f4f6;letter-spacing:-0.11px;-webkit-text-stroke:0.35px #f3f4f6;">select</span>
<span class="t" style="left:1003.9px;top:293.5px;font-size:29.0px;color:#f3f4f6;-webkit-text-stroke:0.35px #f3f4f6;">a</span>
<span class="t" style="left:1029.3px;top:293.5px;font-size:29.0px;color:#f3f4f6;letter-spacing:-0.32px;-webkit-text-stroke:0.35px #f3f4f6;">server</span>
<span class="t" style="left:1119.8px;top:293.5px;font-size:29.0px;color:#f3f4f6;letter-spacing:-0.23px;-webkit-text-stroke:0.35px #f3f4f6;">provider</span>
<span class="t" style="left:1234.1px;top:293.5px;font-size:29.0px;color:#f3f4f6;letter-spacing:-0.85px;-webkit-text-stroke:0.35px #f3f4f6;">and</span>
<span class="t" style="left:1292.5px;top:293.5px;font-size:29.0px;color:#f3f4f6;letter-spacing:-0.36px;-webkit-text-stroke:0.35px #f3f4f6;">generate</span>
<span class="t" style="left:1416.6px;top:293.5px;font-size:29.0px;color:#f3f4f6;letter-spacing:-0.51px;-webkit-text-stroke:0.35px #f3f4f6;">servers</span>
<span class="t" style="left:1521.0px;top:293.5px;font-size:29.0px;color:#f3f4f6;letter-spacing:-0.43px;-webkit-text-stroke:0.35px #f3f4f6;">from</span>
<span class="t" style="left:1590.0px;top:293.5px;font-size:29.0px;color:#f3f4f6;letter-spacing:-0.38px;-webkit-text-stroke:0.35px #f3f4f6;">this</span>
<span class="t" style="left:1646.4px;top:293.5px;font-size:29.0px;color:#f3f4f6;letter-spacing:-0.37px;-webkit-text-stroke:0.35px #f3f4f6;">platform,</span>
<span class="t" style="left:1768.6px;top:293.5px;font-size:29.0px;color:#f3f4f6;letter-spacing:-2.5px;-webkit-text-stroke:0.35px #f3f4f6;">or</span>
<span class="t" style="left:1805.8px;top:293.5px;font-size:29.0px;color:#f3f4f6;letter-spacing:-0.06px;-webkit-text-stroke:0.35px #f3f4f6;">opt</span>
<span class="t" style="left:1858.4px;top:293.5px;font-size:29.0px;color:#f3f4f6;letter-spacing:-0.37px;-webkit-text-stroke:0.35px #f3f4f6;">for</span>
<span class="t" style="left:1903.3px;top:293.5px;font-size:29.0px;color:#f3f4f6;letter-spacing:-0.74px;-webkit-text-stroke:0.35px #f3f4f6;">your</span>
<span class="t" style="left:1969.8px;top:293.5px;font-size:29.0px;color:#f3f4f6;letter-spacing:-0.75px;-webkit-text-stroke:0.35px #f3f4f6;">own</span>
<span class="t" style="left:2034.8px;top:293.5px;font-size:29.0px;color:#f3f4f6;letter-spacing:-0.69px;-webkit-text-stroke:0.35px #f3f4f6;">vendor</span>
<span class="t" style="left:2133.0px;top:293.5px;font-size:29.0px;color:#f3f4f6;letter-spacing:-1.94px;-webkit-text-stroke:0.35px #f3f4f6;">by</span>
<span class="t" style="left:712.9px;top:337.5px;font-size:29.0px;color:#f3f4f6;letter-spacing:-0.26px;-webkit-text-stroke:0.35px #f3f4f6;">clicking on &quot;Custom server&quot; and following the steps.</span>
<span class="t" style="left:756.6px;top:398.4px;font-size:24.8px;color:#5577e6;letter-spacing:1.17px;-webkit-text-stroke:0.35px #5577e6;">Learn more about the server</span>
<span class="t" style="left:733.0px;top:640.0px;font-size:24.8px;color:#f3f4f6;letter-spacing:0.1px;-webkit-text-stroke:0.3px #f3f4f6;">Digital Ocean</span>
<span class="t" style="left:978.3px;top:640.0px;font-size:24.8px;color:#f3f4f6;letter-spacing:0.21px;-webkit-text-stroke:0.3px #f3f4f6;">Linode</span>
<span class="t" style="left:1180.7px;top:640.0px;font-size:24.8px;color:#f3f4f6;letter-spacing:0.21px;-webkit-text-stroke:0.3px #f3f4f6;">Custom</span>
<span class="t" style="left:712.5px;top:740.7px;font-size:29.0px;color:#f3f4f6;letter-spacing:1.15px;-webkit-text-stroke:0.85px #f3f4f6;">Providers</span>
<span class="t" style="left:738.5px;top:810.1px;font-size:29.0px;color:#f3f4f6;letter-spacing:0.36px;-webkit-text-stroke:0.35px #f3f4f6;">Mezohub</span>
<span class="t" style="left:1454.5px;top:740.7px;font-size:29.0px;color:#f3f4f6;letter-spacing:0.98px;-webkit-text-stroke:0.85px #f3f4f6;">Server Name</span>
<span class="t" style="left:1480.5px;top:810.1px;font-size:29.0px;color:#f3f4f6;letter-spacing:0.49px;-webkit-text-stroke:0.35px #f3f4f6;">shallow-lizard</span>
<span class="t" style="left:712.5px;top:904.7px;font-size:29.0px;color:#f3f4f6;letter-spacing:0.87px;-webkit-text-stroke:0.85px #f3f4f6;">Server Size</span>
<span class="t" style="left:738.5px;top:974.1px;font-size:29.0px;color:#f3f4f6;letter-spacing:0.18px;-webkit-text-stroke:0.35px #f3f4f6;">Basic $6</span>
<span class="t" style="left:1454.5px;top:904.7px;font-size:29.0px;color:#f3f4f6;letter-spacing:0.88px;-webkit-text-stroke:0.85px #f3f4f6;">Server Region</span>
<span class="t" style="left:1480.5px;top:974.1px;font-size:29.0px;color:#f3f4f6;letter-spacing:-0.47px;-webkit-text-stroke:0.35px #f3f4f6;">Bangalore 1</span>
<span class="t" style="left:712.5px;top:1068.7px;font-size:29.0px;color:#f3f4f6;letter-spacing:0.58px;-webkit-text-stroke:0.85px #f3f4f6;">Server OS</span>
<span class="t" style="left:738.5px;top:1138.1px;font-size:29.0px;color:#f3f4f6;letter-spacing:0.48px;-webkit-text-stroke:0.35px #f3f4f6;">Ubuntu 20</span>
<span class="t" style="left:1454.5px;top:1068.7px;font-size:29.0px;color:#f3f4f6;letter-spacing:1.12px;-webkit-text-stroke:0.85px #f3f4f6;">Database</span>
<span class="t" style="left:1480.5px;top:1138.1px;font-size:29.0px;color:#f3f4f6;letter-spacing:0.36px;-webkit-text-stroke:0.35px #f3f4f6;">Mysql8.0</span>
<span class="t" style="left:712.5px;top:1232.7px;font-size:29.0px;color:#f3f4f6;letter-spacing:0.5px;-webkit-text-stroke:0.85px #f3f4f6;">Node JS ?</span>
<span class="t" style="left:738.5px;top:1302.1px;font-size:29.0px;color:#f3f4f6;letter-spacing:-0.17px;-webkit-text-stroke:0.35px #f3f4f6;">Node v18</span>
<span class="t" style="left:1816.0px;top:1446.4px;font-size:31.0px;color:#f3f4f6;letter-spacing:-1.0px;-webkit-text-stroke:0.5px #f3f4f6;">Cancel</span>
<span class="t" style="left:1990.5px;top:1446.4px;font-size:31.0px;color:#f3f4f6;letter-spacing:-0.62px;-webkit-text-stroke:1.1px #f3f4f6;">Add Server</span>
</div>
</body></html>
